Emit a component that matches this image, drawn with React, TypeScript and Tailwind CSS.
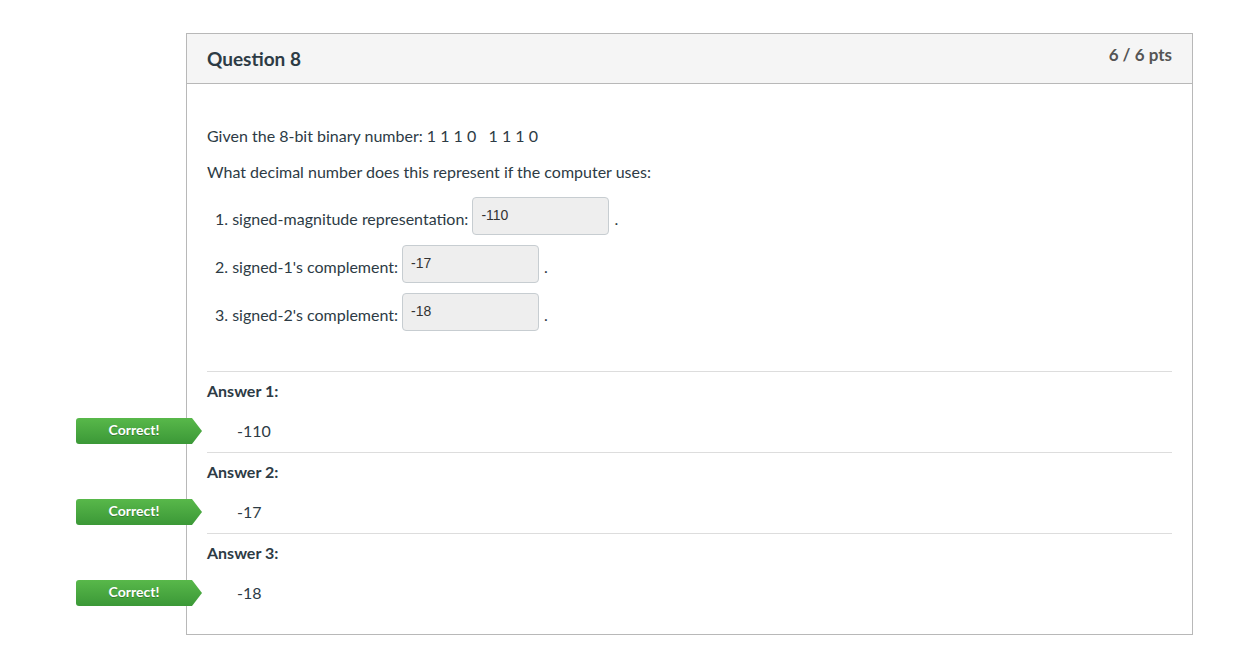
import { FC } from "react";

type Blank = { label: string; value: string };

const blanks: Blank[] = [
  { label: "1. signed-magnitude representation:", value: "-110" },
  { label: "2. signed-1's complement:", value: "-17" },
  { label: "3. signed-2's complement:", value: "-18" },
];

const answers = ["-110", "-17", "-18"];

const CorrectBadge: FC = () => (
  <div className="absolute left-[-131px] top-[-1px] h-[26px] w-[126px] rounded-l-[3px] bg-linear-to-b from-[#58b84a] to-[#3b9837] [clip-path:polygon(0_0,calc(100%-10px)_0,100%_50%,calc(100%-10px)_100%,0_100%)] flex items-center pr-[10px] pb-[2px]">
    <span className="w-full text-center text-[14px] font-bold text-white [text-shadow:0_1px_0_rgba(0,0,0,0.25)]">
      Correct!
    </span>
  </div>
);

export default function App() {
  return (
    <div className="w-[1242px] h-[660px] bg-white pt-[33px] font-['Lato','Noto_Sans',sans-serif] text-[#2d3b45]">
      <div className="ml-[186px] w-[1007px] border border-[#b8b8b8]">
        <div className="h-[50px] flex justify-between bg-[#f5f5f5] border-b border-[#b8b8b8] px-[20px]">
          <h2 className="text-[19px] font-bold leading-[24px] mt-[13px]">
            Question 8
          </h2>
          <div className="text-[17px] font-bold leading-[20px] mt-[11px] text-[#555]">
            6 / 6 pts
          </div>
        </div>
        <div className="px-[20px] pt-[40px] pb-[29px]">
          <p className="text-[16px] leading-[24px]">
            Given the 8-bit binary number: 1 1 1 0{"\u00a0\u00a0 "}1 1 1 0
          </p>
          <p className="text-[16px] leading-[24px] mt-[12px]">
            What decimal number does this represent if the computer uses:
          </p>
          <div className="mt-[13px] pl-[8px] flex flex-col gap-[10px]">
            {blanks.map((b) => (
              <div key={b.label} className="flex items-start h-[38px]">
                <span className="text-[16px] leading-[24px] mt-[10px]">
                  {b.label}
                </span>
                <div className="ml-[4px] w-[137px] h-[38px] rounded-[4px] border border-[#c7cdd1] bg-[#eeeeee] px-[8px] pt-[9px] text-[14px] leading-[16px] text-[#333] font-['Liberation_Sans',sans-serif]">
                  {b.value}
                </div>
                <span className="ml-[5px] text-[16px] leading-[24px] mt-[10px]">
                  .
                </span>
              </div>
            ))}
          </div>
          <div className="mt-[40px]">
            {answers.map((a, i) => (
              <div key={a} className="border-t border-[#dddddd]">
                <div className="pt-[7px] text-[16px] font-bold leading-[24px]">
                  Answer {i + 1}:
                </div>
                <div
                  className={`relative mt-[16px] pl-[30px] text-[16px] leading-[24px] ${
                    i < answers.length - 1 ? "mb-[9px]" : ""
                  }`}
                >
                  <CorrectBadge />
                  {a}
                </div>
              </div>
            ))}
          </div>
        </div>
      </div>
    </div>
  );
}
